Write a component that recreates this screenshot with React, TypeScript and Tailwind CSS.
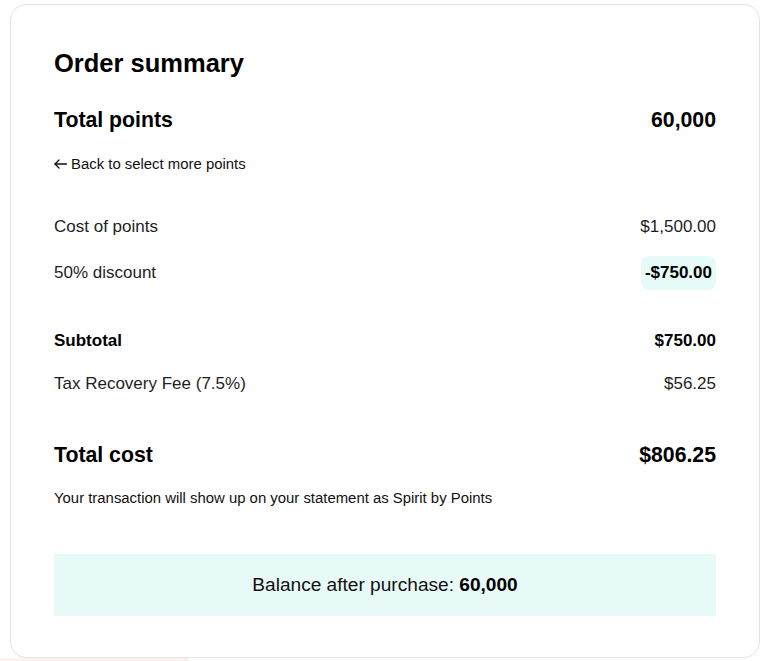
import React from "react";

export default function App() {
  return (
    <div
      className="w-[768px] h-[661px] bg-white overflow-hidden"
      style={{ fontFamily: '"Liberation Sans", Arial, sans-serif' }}
    >
      <div className="pt-[4px] pl-[10px]">
        <div className="w-[750px] h-[654px] border border-[#e3e3ea] rounded-[16px] bg-white pt-[42px] px-[43px] pb-[40px] flex flex-col text-[#1e1e1e]">
          <h1 className="text-[25.5px] leading-[32px] font-bold text-black">Order summary</h1>

          <div className="mt-[27px] flex justify-between items-center">
            <span className="text-[21.25px] leading-[28px] font-bold text-black">Total points</span>
            <span className="text-[21.25px] leading-[28px] font-bold text-black">60,000</span>
          </div>

          <div className="mt-[20px] text-[14.9px] leading-[20px] text-[#111111] flex items-center">
            <svg width="13" height="10" viewBox="0 0 13 10" className="mr-[4px] shrink-0" fill="none" stroke="#111111" strokeWidth="1.3" strokeLinecap="round" strokeLinejoin="round">
              <path d="M12.5 5H1" />
              <path d="M5 1L1 5L5 9" />
            </svg>
            <span>Back to select more points</span>
          </div>

          <div className="mt-[41px] flex justify-between items-center text-[17px] leading-[24px]">
            <span>Cost of points</span>
            <span>$1,500.00</span>
          </div>

          <div className="mt-[17px] flex justify-between items-center text-[17px] leading-[24px]">
            <span>50% discount</span>
            <span className="bg-[#e6faf8] rounded-[8px] px-[4px] py-[5px] font-bold text-black">-$750.00</span>
          </div>

          <div className="mt-[39px] flex justify-between items-center text-[17px] leading-[24px] font-bold text-black">
            <span>Subtotal</span>
            <span>$750.00</span>
          </div>

          <div className="mt-[19px] flex justify-between items-center text-[17px] leading-[24px]">
            <span>Tax Recovery Fee (7.5%)</span>
            <span>$56.25</span>
          </div>

          <div className="mt-[45px] flex justify-between items-center text-[21.25px] leading-[28px] font-bold text-black">
            <span>Total cost</span>
            <span>$806.25</span>
          </div>

          <div className="mt-[19px] text-[14.9px] leading-[20px] text-[#111111]">
            Your transaction will show up on your statement as Spirit by Points
          </div>

          <div className="mt-[46px] h-[62px] bg-[#e7faf8] flex items-center justify-center text-[19.1px] leading-[28px] text-[#111111]">
            <span>
              Balance after purchase: <span className="font-bold text-black">60,000</span>
            </span>
          </div>
        </div>
      </div>
      <div className="w-[189px] h-[3px] bg-[#fdf1ef]" />
    </div>
  );
}
